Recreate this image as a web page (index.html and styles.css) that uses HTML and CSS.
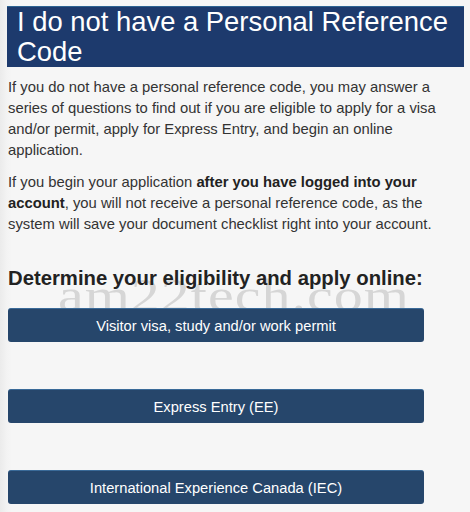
FILE: index.html
```html
<!DOCTYPE html>
<html lang="en">
<head>
    <meta charset="UTF-8">
    <meta name="viewport" content="width=device-width, initial-scale=1.0">
    <title>I do not have a Personal Reference Code</title>
<link rel="stylesheet" href="styles.css">
</head>

<body>
<div class="wrapper">
    <h1 class="title">I do not have a Personal Reference Code</h1>
    <div class="intro">
        <p>If you do not have a personal reference code, you may answer a series of questions to find out if you are eligible to apply for a visa and/or permit, apply for Express Entry, and begin an online application.</p>
        <p>If you begin your application <strong>after you have logged into your account</strong>, you will not receive a personal reference code, as the system will save your document checklist right into your account.</p>
    </div>
    <div class="apply">
        <h2>Determine your eligibility and apply online:</h2>
        <span class="mark">am22tech.com</span>
        <ul class="btns">
            <li><a href="#">Visitor visa, study and/or work permit</a></li>
            <li><a href="#">Express Entry (EE)</a></li>
            <li><a href="#">International Experience Canada (IEC)</a></li>
        </ul>
    </div>
</div>
</body>
</html>
```

FILE: styles.css
```css
*{
	padding:0;
	margin:0;
	}
a{
	text-decoration:none;
	}
ul{
	list-style:none;
	}
html,body{
	height:100%;
	overflow:hidden;
	}
body{
	background:#f6f6f6;
	background-image:linear-gradient(to right,#ebebeb 0,#f3f3f3 7px,#f6f6f6 12px);
	font-family:"Liberation Sans",Arial,Helvetica,sans-serif;
	color:#333;
	}
.wrapper{
	padding:6px 6px 0 7px;
	}
.title{
	background:#1d3a6d;
	border-top:1px solid #2d6392;
	color:#fff;
	font-size:27.4px;
	font-weight:normal;
	line-height:30px;
	padding:0 8px 0 10px;
	}
.intro{
	padding:10px 8px 0 1px;
	}
.intro p{
	font-size:14.8px;
	line-height:21px;
	color:#333;
	margin-bottom:11px;
	}
.intro strong{
	color:#222;
	}
.apply{
	position:relative;
	padding:19px 0 0 1px;
	}
.apply h2{
	position:relative;
	z-index:2;
	font-size:20.3px;
	line-height:26px;
	color:#222;
	}
/* watermark */
.mark{
	position:absolute;
	left:51px;
	top:24px;
	z-index:1;
	font-family:"Liberation Serif","Times New Roman",serif;
	font-size:58px;
	line-height:44px;
	color:#d6d6d6;
	letter-spacing:1px;
	transform:scaleY(0.8);
	transform-origin:0 40px;
	}
.btns{
	position:relative;
	z-index:2;
	padding-top:17px;
	width:416px;
	}
.btns li{
	margin-bottom:47px;
	}
.btns li:last-child{
	margin-bottom:0;
	}
.btns a{
	display:block;
	height:34px;
	line-height:34px;
	background:#26466b;
	border-top:1px solid #3a6a98;
	box-sizing:border-box;
	border-radius:3px;
	color:#fff;
	font-size:14.7px;
	text-align:center;
	}
```
